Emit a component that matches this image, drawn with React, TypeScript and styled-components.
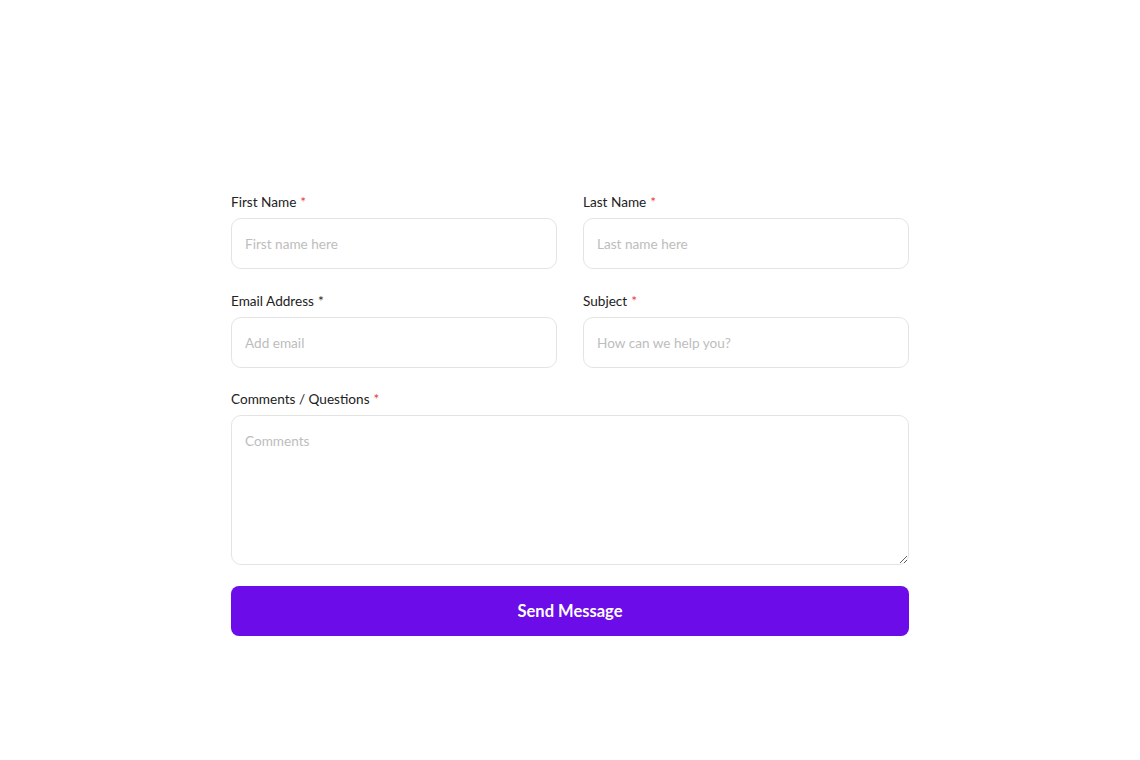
import React from "react";
import styled, { createGlobalStyle } from "styled-components";

const GlobalStyle = createGlobalStyle`
  html, body {
    margin: 0;
    padding: 0;
    background: #ffffff;
  }
  body {
    font-family: "Lato", "Noto Sans", "Liberation Sans", sans-serif;
    color: #222222;
  }
  * {
    box-sizing: border-box;
  }
`;

const Page = styled.div`
  width: 1140px;
  height: 760px;
  padding-top: 194px;
`;

const Form = styled.form`
  width: 678px;
  margin: 0 auto;
  display: grid;
  grid-template-columns: 1fr 1fr;
  column-gap: 26px;
  row-gap: 24px;
`;

const Field = styled.div<{ wide?: boolean }>`
  display: flex;
  flex-direction: column;
  gap: 8px;
  grid-column: ${(p) => (p.wide ? "1 / -1" : "auto")};
  margin-top: ${(p) => (p.wide ? "-1px" : "0")};
`;

const Label = styled.label`
  font-size: 13.6px;
  line-height: 16px;
  color: #222222;
`;

const Star = styled.span<{ plain?: boolean }>`
  color: ${(p) => (p.plain ? "#222222" : "#e5383b")};
  margin-left: 4px;
`;

const Input = styled.input`
  height: 51px;
  width: 100%;
  border: 1px solid #e4e4e4;
  border-radius: 10px;
  padding: 0 13px;
  font-family: inherit;
  font-size: 13.6px;
  color: #222222;
  outline: none;
  &::placeholder {
    color: #bdbdbd;
  }
`;

const TextArea = styled.textarea`
  height: 150px;
  width: 100%;
  border: 1px solid #e4e4e4;
  border-radius: 10px;
  padding: 17px 13px;
  font-family: inherit;
  font-size: 13.6px;
  color: #222222;
  outline: none;
  resize: vertical;
  &::placeholder {
    color: #bdbdbd;
  }
`;

const SendButton = styled.button`
  grid-column: 1 / -1;
  margin-top: -3px;
  height: 50px;
  border: none;
  border-radius: 8px;
  background: #6c0ce8;
  color: #ffffff;
  font-family: inherit;
  font-size: 16.5px;
  font-weight: 700;
  cursor: pointer;
`;

interface FieldDef {
  label: string;
  placeholder: string;
  plainStar?: boolean;
}

const fields: FieldDef[] = [
  { label: "First Name", placeholder: "First name here" },
  { label: "Last Name", placeholder: "Last name here" },
  { label: "Email Address", placeholder: "Add email", plainStar: true },
  { label: "Subject", placeholder: "How can we help you?" },
];

const App = () => {
  return (
    <Page>
      <GlobalStyle />
      <Form onSubmit={(e) => e.preventDefault()}>
        {fields.map((f) => (
          <Field key={f.label}>
            <Label>
              {f.label}
              <Star plain={f.plainStar}>*</Star>
            </Label>
            <Input placeholder={f.placeholder} />
          </Field>
        ))}
        <Field wide>
          <Label>
            Comments / Questions
            <Star>*</Star>
          </Label>
          <TextArea placeholder="Comments" />
        </Field>
        <SendButton type="submit">Send Message</SendButton>
      </Form>
    </Page>
  );
};

export default App;
